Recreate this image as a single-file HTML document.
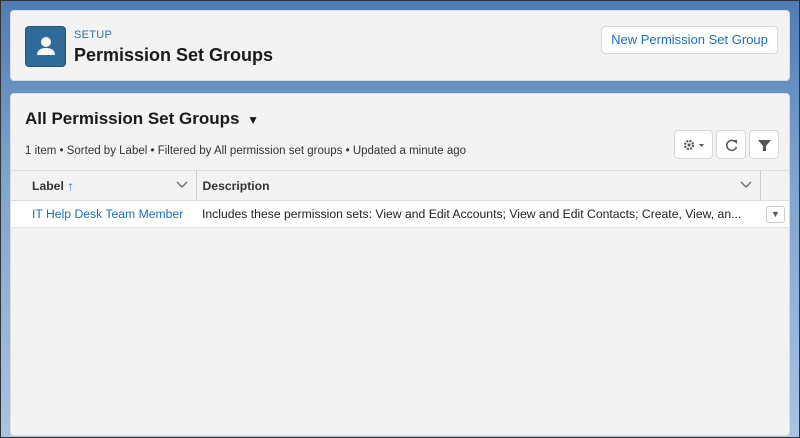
<!DOCTYPE html>
<html><head><meta charset="utf-8"><style>
*{box-sizing:border-box;margin:0;padding:0}
body{width:800px;height:438px;overflow:hidden;font-family:"Liberation Sans",sans-serif;background:linear-gradient(180deg,#4f7cb5 0%,#7ea3d0 40%,#a9c3e3 100%);position:relative;border:1px solid #333}
.card{position:absolute;left:9px;right:9px;background:#f3f3f3;border-radius:4px;border:1px solid #dcdcdc;overflow:hidden}
.top{top:9px;height:71px}
.icon{position:absolute;left:14px;top:15px;width:41px;height:41px;background:#2f6b98;border-radius:4px;border:1px solid #245577}
.setup{position:absolute;left:63px;top:18px;font-size:11px;color:#2f6fa8;letter-spacing:.3px}
.title{position:absolute;left:63px;top:34px;font-size:18px;font-weight:bold;color:#1a1a1a}
.btn{position:absolute;background:#fff;border:1px solid #d8d8d8;border-radius:4px}
.nb{right:11px;top:15px;width:177px;height:28px;color:#1b6fc4;font-size:13px;text-align:center;line-height:26px}
.main{top:92px;bottom:1px}
.h2{position:absolute;left:14px;top:15px;font-size:17px;font-weight:bold;color:#1a1a1a}
.meta{position:absolute;left:14px;top:51px;font-size:11.5px;color:#333}
table{position:absolute;left:0;top:76px;width:100%;border-collapse:collapse;font-size:12.2px}
th{height:30px;text-align:left;font-weight:bold;color:#333;border-top:1px solid #ddd;border-bottom:1px solid #ddd;padding-left:21px;background:#f3f3f3;position:relative}
td{height:27px;background:#fff;border-bottom:1px solid #e5e5e5;padding-left:21px;color:#222;white-space:nowrap}
.chev{position:absolute;right:8px;top:10px}
</style></head><body>
<div class="card top">
 <div class="icon"><svg width="41" height="41" viewBox="0 0 41 41"><circle cx="20" cy="15" r="5" fill="#fff"/><path d="M11 28c0-5 4-7 9-7s9 2 9 7z" fill="#fff"/></svg></div>
 <div class="setup">SETUP</div>
 <div class="title">Permission Set Groups</div>
 <div class="btn nb">New Permission Set Group</div>
</div>
<div class="card main">
 <div class="h2">All Permission Set Groups <span style="font-size:12px;margin-left:3px">&#9660;</span></div>
 <div class="meta">1 item • Sorted by Label • Filtered by All permission set groups • Updated a minute ago</div>
 <div class="btn" style="left:663px;top:36px;width:39px;height:29px"><svg width="39" height="29"><circle cx="14" cy="14" r="4" fill="none" stroke="#555" stroke-width="2.2" stroke-dasharray="2 1.2"/><circle cx="14" cy="14" r="1.5" fill="#555"/><path d="M24 13h5l-2.5 3z" fill="#555"/></svg></div>
 <div class="btn" style="left:705px;top:36px;width:30px;height:29px"><svg width="29" height="29"><path d="M18.5 11a5 5 0 1 0 1 5" fill="none" stroke="#555" stroke-width="1.5"/><path d="M16 9h4v4z" fill="#555"/></svg></div>
 <div class="btn" style="left:738px;top:36px;width:30px;height:29px"><svg width="29" height="29"><path d="M8 9h13l-5 6v5h-3v-5z" fill="#555"/></svg></div>
 <table>
  <tr><th style="width:185px;border-right:1px solid #ccc">Label <span style="color:#1b6fc4">&#8593;</span><svg class="chev" width="12" height="8"><path d="M1 1l5 5 5-5" fill="none" stroke="#666" stroke-width="1.3"/></svg></th>
  <th style="padding-left:6px;border-right:1px solid #ccc">Description<svg class="chev" width="12" height="8"><path d="M1 1l5 5 5-5" fill="none" stroke="#666" stroke-width="1.3"/></svg></th>
  <th style="width:29px;padding:0"></th></tr>
  <tr><td style="color:#1b6fc4">IT Help Desk Team Member</td><td style="padding-left:6px">Includes these permission sets: View and Edit Accounts; View and Edit Contacts; Create, View, an...</td>
  <td style="padding:0"><div style="width:19px;height:17px;border:1px solid #ccc;border-radius:3px;margin-left:6px;text-align:center;font-size:9px;line-height:15px;color:#555">&#9660;</div></td></tr>
 </table>
</div>
</body></html>
